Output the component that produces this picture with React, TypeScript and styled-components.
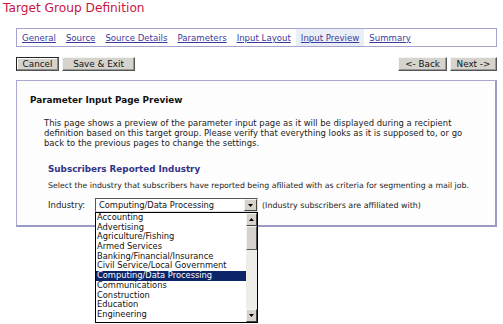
import React from "react";
import styled, { createGlobalStyle } from "styled-components";

const Global = createGlobalStyle`
  html, body { margin: 0; padding: 0; background: #ffffff; }
  body { font-family: "DejaVu Sans", Verdana, sans-serif; color: #111; }
`;

const Page = styled.div`
  width: 503px;
  height: 324px;
  overflow: hidden;
  position: relative;
`;

const Title = styled.h1`
  margin: 0;
  padding: 1px 0 0 3px;
  height: 15px;
  font-size: 12.2px;
  font-weight: normal;
  color: #c8143f;
  line-height: 14px;
`;

const Nav = styled.nav`
  margin: 12px 6px 0 16px;
  height: 17px;
  border: 1px solid #a4a4cc;
  display: flex;
  align-items: stretch;
  padding-left: 0;
`;

const NavLink = styled.a<{ $active?: boolean }>`
  display: flex;
  align-items: center;
  padding: 0 5px;
  font-size: 8.6px;
  color: #3b3b9c;
  text-decoration: underline;
  background: ${(p) => (p.$active ? "#eaeef7" : "transparent")};
`;

const ButtonRow = styled.div`
  margin: 10px 6px 0 16px;
  display: flex;
  justify-content: space-between;
`;

const Group = styled.div`
  display: flex;
  gap: 3px;
`;

const Button = styled.button<{ $default?: boolean; $w: number }>`
  width: ${(p) => p.$w}px;
  height: 14px;
  padding: 0;
  font-family: "DejaVu Sans", Verdana, sans-serif;
  font-size: 8.8px;
  color: #111;
  background: #d6d3cc;
  border: 1px solid ${(p) => (p.$default ? "#222" : "#f4f4f4")};
  border-right-color: #555;
  border-bottom-color: #555;
  box-shadow: ${(p) => (p.$default ? "inset -1px -1px #888, inset 1px 1px #fff" : "inset -1px -1px #999")};
  line-height: 12px;
`;

const Panel = styled.section`
  margin: 9px 6px 0 16px;
  border: 1px solid #a8a8d0;
  border-right: 2px solid #9a9ac4;
  border-bottom: 2px solid #9a9ac4;
  background: #fdfdfd;
  padding: 14px 0 0 13px;
  box-sizing: border-box;
  height: 147px;
  position: relative;
`;

const PanelHeading = styled.h2`
  margin: 0;
  font-size: 8.85px;
  font-weight: bold;
  line-height: 11px;
  color: #111;
`;

const Para = styled.p`
  margin: 12px 0 0 14px;
  width: 432px;
  font-size: 8.45px;
  line-height: 10px;
  color: #222;
`;

const Section = styled.div`
  margin: 16px 0 0 18px;
`;

const SubHeading = styled.h3`
  margin: 0;
  font-size: 8.8px;
  font-weight: bold;
  color: #333388;
  line-height: 11px;
`;

const Hint = styled.div`
  margin-top: 6px;
  font-size: 7.8px;
  line-height: 10px;
  color: #222;
  white-space: nowrap;
`;

const FieldRow = styled.div`
  margin-top: 7px;
  display: flex;
  align-items: center;
`;

const Label = styled.span`
  width: 47px;
  font-size: 8.5px;
  color: #222;
`;

const SelectWrap = styled.div`
  position: relative;
  width: 163px;
  height: 14px;
  box-sizing: border-box;
  border: 1px solid;
  border-color: #555 #ddd #ddd #555;
  background: #fff;
  display: flex;
  align-items: center;
`;

const SelectValue = styled.span`
  flex: 1;
  padding-left: 3px;
  font-size: 8.3px;
  color: #111;
  white-space: nowrap;
`;

const ArrowBtn = styled.span`
  width: 13px;
  height: 12px;
  box-sizing: border-box;
  background: #d6d3cc;
  border: 1px solid #f4f4f4;
  border-right-color: #444;
  border-bottom-color: #444;
  display: flex;
  align-items: center;
  justify-content: center;
`;

const Note = styled.span`
  margin-left: 4px;
  font-size: 7.95px;
  color: #222;
  white-space: nowrap;
`;

const DropList = styled.div`
  position: absolute;
  left: -1px;
  top: 13px;
  width: 163px;
  height: 111px;
  box-sizing: border-box;
  border: 1px solid #000;
  background: #fff;
  display: flex;
  z-index: 5;
`;

const Items = styled.ul`
  flex: 1;
  margin: 0;
  padding: 0;
  list-style: none;
  overflow: hidden;
`;

const Item = styled.li<{ $selected?: boolean }>`
  height: 9.7px;
  line-height: 9.7px;
  padding-left: 1px;
  font-size: 8.3px;
  white-space: nowrap;
  color: ${(p) => (p.$selected ? "#fff" : "#111")};
  background: ${(p) => (p.$selected ? "#0c2468" : "transparent")};
`;

const ScrollBar = styled.div`
  width: 11px;
  background: #eeede8;
  display: flex;
  flex-direction: column;
  justify-content: space-between;
  position: relative;
`;

const ScrollBtn = styled.div`
  height: 13px;
  box-sizing: border-box;
  background: #d6d3cc;
  border: 1px solid #f4f4f4;
  border-right-color: #444;
  border-bottom-color: #444;
  display: flex;
  align-items: center;
  justify-content: center;
`;

const Thumb = styled.div`
  position: absolute;
  top: 13px;
  left: 0;
  width: 11px;
  height: 24px;
  box-sizing: border-box;
  background: #d6d3cc;
  border: 1px solid #f4f4f4;
  border-right-color: #555;
  border-bottom-color: #555;
`;

const Tri = ({ up }: { up?: boolean }) => (
  <svg width="5" height="3" viewBox="0 0 5 3">
    <polygon points={up ? "0,3 5,3 2.5,0" : "0,0 5,0 2.5,3"} fill="#000" />
  </svg>
);

const industries = [
  "Accounting",
  "Advertising",
  "Agriculture/Fishing",
  "Armed Services",
  "Banking/Financial/Insurance",
  "Civil Service/Local Government",
  "Computing/Data Processing",
  "Communications",
  "Construction",
  "Education",
  "Engineering",
];

const links = [
  "General",
  "Source",
  "Source Details",
  "Parameters",
  "Input Layout",
  "Input Preview",
  "Summary",
];

export default function App() {
  return (
    <Page>
      <Global />
      <Title>Target Group Definition</Title>
      <Nav>
        {links.map((l) => (
          <NavLink key={l} $active={l === "Input Preview"}>
            {l}
          </NavLink>
        ))}
      </Nav>
      <ButtonRow>
        <Group>
          <Button $default $w={43}>Cancel</Button>
          <Button $w={73}>Save &amp; Exit</Button>
        </Group>
        <Group>
          <Button $w={49}>&lt;- Back</Button>
          <Button $w={47}>Next -&gt;</Button>
        </Group>
      </ButtonRow>
      <Panel>
        <PanelHeading>Parameter Input Page Preview</PanelHeading>
        <Para>
          This page shows a preview of the parameter input page as it will be
          displayed during a recipient definition based on this target group.
          Please verify that everything looks as it is supposed to, or go back
          to the previous pages to change the settings.
        </Para>
        <Section>
          <SubHeading>Subscribers Reported Industry</SubHeading>
          <Hint>
            Select the industry that subscribers have reported being afiliated
            with as criteria for segmenting a mail job.
          </Hint>
          <FieldRow>
            <Label>Industry:</Label>
            <SelectWrap>
              <SelectValue>Computing/Data Processing</SelectValue>
              <ArrowBtn>
                <Tri />
              </ArrowBtn>
              <DropList>
                <Items>
                  {industries.map((i) => (
                    <Item key={i} $selected={i === "Computing/Data Processing"}>
                      {i}
                    </Item>
                  ))}
                </Items>
                <ScrollBar>
                  <ScrollBtn>
                    <Tri up />
                  </ScrollBtn>
                  <Thumb />
                  <ScrollBtn>
                    <Tri />
                  </ScrollBtn>
                </ScrollBar>
              </DropList>
            </SelectWrap>
            <Note>(Industry subscribers are affiliated with)</Note>
          </FieldRow>
        </Section>
      </Panel>
    </Page>
  );
}
